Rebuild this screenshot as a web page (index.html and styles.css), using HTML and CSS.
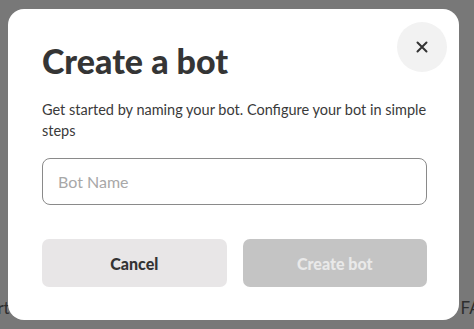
FILE: index.html
```html
<!DOCTYPE html>
<html lang="en">
<head>
	<meta charset="UTF-8">
	<title>Create a bot</title>
	<link rel="stylesheet" href="styles.css">
</head>
<body>
<div id="page">
	<span class="left">Start</span>
	<span class="right">FAQ</span>
</div>
<div id="modal">
	<button class="close" aria-label="Close">
		<svg width="12" height="12" viewBox="0 0 12 12"><path d="M1.5 1.5L10.5 10.5M10.5 1.5L1.5 10.5" stroke="#333" stroke-width="2" stroke-linecap="round"/></svg>
	</button>
	<h1 class="title">Create a bot</h1>
	<p class="desc">Get started by naming your bot. Configure your bot in simple steps</p>
	<input type="text" class="name" placeholder="Bot Name">
	<div class="actions">
		<button class="btn cancel">Cancel</button>
		<button class="btn create">Create bot</button>
	</div>
</div>
</body>
</html>
```
FILE: styles.css
```css
*{margin: 0;padding: 0;box-sizing: border-box;}
body{
	width: 474px;
	height: 329px;
	overflow: hidden;
	background: #787878;
	font-family: Lato, "Noto Sans", sans-serif;
	color: #333;
	position: relative;
}
#page{
	display: flex;
	justify-content: space-between;
	padding-top: 297px;
	font-size: 17px;
	color: #2e2e2e;
}
#page .left{
	margin-left: -26px;
}
#page .right{
	margin-right: -20px;
}
#modal{
	position: absolute;
	left: 8px;
	top: 9px;
	width: 451px;
	height: 311px;
	background: #fff;
	border-radius: 16px;
	padding: 32px 32px 0 34px;
}
.close{
	position: absolute;
	top: 13px;
	right: 12px;
	width: 50px;
	height: 50px;
	border: none;
	border-radius: 50%;
	background: #f2f2f2;
	display: flex;
	align-items: center;
	justify-content: center;
}
.title{
	font-size: 34px;
	font-weight: 900;
	line-height: 40px;
	color: #353535;
}
.desc{
	margin-top: 18px;
	font-size: 14.5px;
	line-height: 21px;
	color: #3a3a3a;
}
.name{
	display: block;
	width: 100%;
	height: 47px;
	margin-top: 17px;
	border: 1px solid #8a8a8a;
	border-radius: 8px;
	padding: 0 15px;
	font: 16px Lato, "Noto Sans", sans-serif;
	outline: none;
}
.name::placeholder{
	color: #a8a8a8;
}
.actions{
	display: flex;
	gap: 16px;
	margin-top: 34px;
}
.btn{
	flex: 1;
	height: 48px;
	border: none;
	border-radius: 7px;
	font: 900 16px Lato, "Noto Sans", sans-serif;
}
.cancel{
	background: #e8e6e7;
	color: #333;
}
.create{
	background: #c4c4c4;
	color: #e9e9e9;
}
```
